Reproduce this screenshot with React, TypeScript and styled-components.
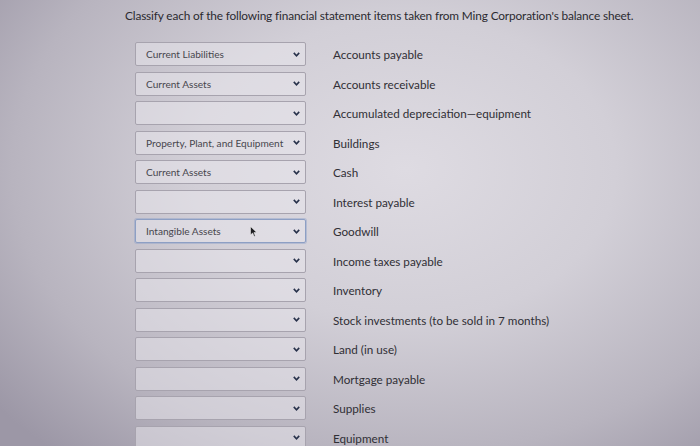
import styled, { createGlobalStyle } from "styled-components";

const GlobalStyle = createGlobalStyle`
  html, body {
    margin: 0;
    padding: 0;
    height: 100%;
    overflow: hidden;
  }
  body {
    font-family: Lato, "Open Sans", sans-serif;
    background: radial-gradient(ellipse 75% 85% at 58% 38%, #dedbe2 0%, #d2cfd7 40%, #b8b4bf 75%, #9c97a6 100%);
  }
`;

const Page = styled.main`
  width: 700px;
  height: 446px;
  padding: 8px 0 0 125px;
  box-sizing: border-box;
`;

const Prompt = styled.p`
  margin: 0;
  font-size: 11.85px;
  line-height: 16px;
  color: #2b2a30;
  letter-spacing: -0.15px;
`;

const Rows = styled.div`
  margin-top: 18px;
  margin-left: 10px;
  display: flex;
  flex-direction: column;
  gap: 5.5px;
`;

const Row = styled.div`
  display: grid;
  grid-template-columns: 171px 1fr;
  column-gap: 27px;
  align-items: center;
  height: 24px;
`;

const SelectBox = styled.div<{ $focused?: boolean }>`
  position: relative;
  height: 24px;
  box-sizing: border-box;
  display: flex;
  align-items: center;
  justify-content: space-between;
  padding: 0 5px 0 10px;
  background: rgba(234, 232, 237, 0.5);
  border: 1px solid ${(p) => (p.$focused ? "#8d9fc4" : "#a7a3ae")};
  box-shadow: ${(p) => (p.$focused ? "0 0 0 1px rgba(140,160,200,0.45)" : "none")};
  border-radius: 2px;
  font-size: 10.1px;
  color: #47464d;
`;

const Label = styled.span`
  font-size: 11.7px;
  color: #302f35;
`;

const Cursor = styled.svg`
  position: absolute;
  left: 114px;
  top: 6px;
`;

const Chevron = () => (
  <svg width="7" height="5" viewBox="0 0 7 5">
    <polyline
      points="0.8,0.9 3.5,3.8 6.2,0.9"
      fill="none"
      stroke="#27314a"
      strokeWidth="1.6"
    />
  </svg>
);

const items: { value: string; label: string; focused?: boolean }[] = [
  { value: "Current Liabilities", label: "Accounts payable" },
  { value: "Current Assets", label: "Accounts receivable" },
  { value: "", label: "Accumulated depreciation—equipment" },
  { value: "Property, Plant, and Equipment", label: "Buildings" },
  { value: "Current Assets", label: "Cash" },
  { value: "", label: "Interest payable" },
  { value: "Intangible Assets", label: "Goodwill", focused: true },
  { value: "", label: "Income taxes payable" },
  { value: "", label: "Inventory" },
  { value: "", label: "Stock investments (to be sold in 7 months)" },
  { value: "", label: "Land (in use)" },
  { value: "", label: "Mortgage payable" },
  { value: "", label: "Supplies" },
  { value: "", label: "Equipment" },
];

export default function App() {
  return (
    <>
      <GlobalStyle />
      <Page>
        <Prompt>
          Classify each of the following financial statement items taken from
          Ming Corporation's balance sheet.
        </Prompt>
        <Rows>
          {items.map((item, i) => (
            <Row key={i}>
              <SelectBox $focused={item.focused}>
                <span>{item.value}</span>
                <Chevron />
                {item.focused && (
                  <Cursor width="8" height="11" viewBox="0 0 8 11">
                    <path d="M0.5 0.5 L0.5 9 L2.6 7 L4.2 10.5 L5.4 10 L3.9 6.6 L6.8 6.6 Z" fill="#1e1e22" stroke="#fff" strokeWidth="0.5" />
                  </Cursor>
                )}
              </SelectBox>
              <Label>{item.label}</Label>
            </Row>
          ))}
        </Rows>
      </Page>
    </>
  );
}
